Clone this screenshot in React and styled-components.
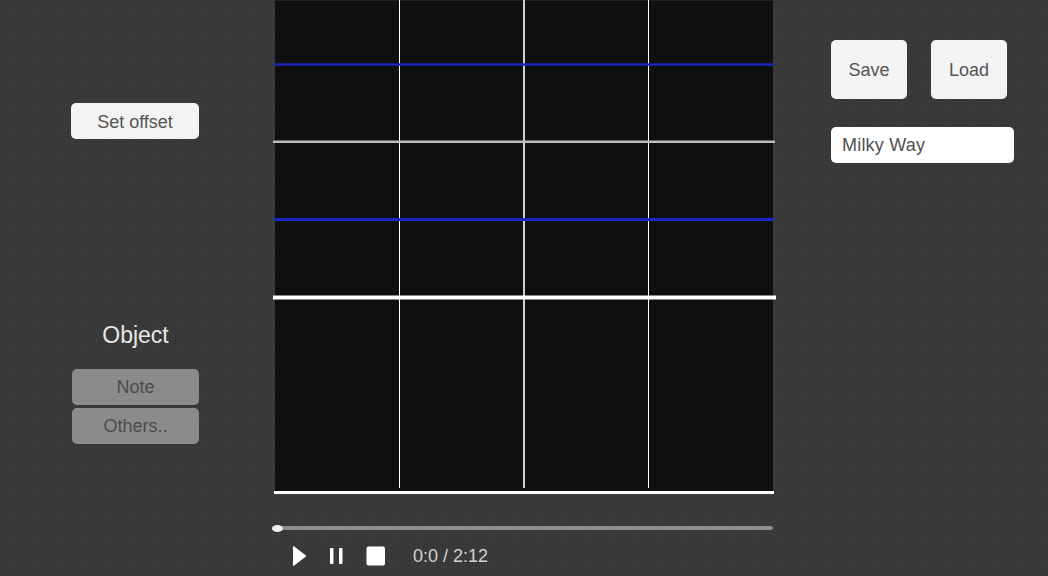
import React from 'react';
import styled, { createGlobalStyle, css } from 'styled-components';

const GlobalStyle = createGlobalStyle`
  html, body {
    margin: 0;
    padding: 0;
    overflow: hidden;
    background: #393939;
  }
`;

const Page = styled.div`
  width: 1048px;
  height: 576px;
  display: grid;
  grid-template-columns: 272px 504px 272px;
  font-family: 'Liberation Sans', Arial, sans-serif;
  background-color: #3a3a3a;
  background-image: radial-gradient(#313131 0.7px, transparent 0.9px);
  background-size: 3px 3px;
`;

const LeftPanel = styled.aside`
  display: flex;
  flex-direction: column;
  align-items: flex-start;
  padding: 103px 0 0 71px;
`;

const RightPanel = styled.aside`
  display: flex;
  flex-direction: column;
  align-items: flex-start;
  padding: 40px 0 0 55px;
`;

const Center = styled.main`
  display: flex;
  flex-direction: column;
`;

const Button = styled.button`
  box-sizing: border-box;
  padding: 0;
  border: 0;
  border-radius: 5px;
  background: #f3f3f3;
  color: #555;
  font: 18px/1 'Liberation Sans', Arial, sans-serif;
  ${(p) =>
    p.$muted &&
    css`
      background: #8b8b8b;
      color: #4c4c4c;
    `}
`;

const OffsetButton = styled(Button)`
  width: 128px;
  height: 36px;
  padding-top: 1px;
`;

const ObjectSection = styled.section`
  display: flex;
  flex-direction: column;
  align-items: center;
  width: 129px;
  margin-top: 182px;
  gap: 3px;
`;

const ObjectTitle = styled.h2`
  margin: 0 0 17px;
  color: #e6e6e6;
  font-size: 23px;
  font-weight: normal;
  line-height: 28px;
`;

const ObjectButton = styled(Button)`
  width: 127px;
  height: 36px;
`;

const FileButtons = styled.div`
  display: flex;
  gap: 24px;
`;

const FileButton = styled(Button)`
  width: 76px;
  height: 59px;
`;

const NameInput = styled.input`
  box-sizing: border-box;
  width: 183px;
  height: 36px;
  margin-top: 28px;
  padding: 0 11px;
  border: 0;
  border-radius: 5px;
  background: #fff;
  color: #505050;
  font: 18px 'Liberation Sans', Arial, sans-serif;
  letter-spacing: 0.2px;
  outline: none;
`;

const Board = styled.div`
  position: relative;
  box-sizing: border-box;
  height: 494px;
  margin: 0 3px 0 3px;
  background: #0f0f0f;
  border-top: 1px solid #222;
`;

const BoardLines = styled.svg`
  position: absolute;
  left: -3px;
  top: -1px;
  display: block;
`;

const Seek = styled.div`
  position: relative;
  height: 4px;
  margin: 32px 3px 0 0;
  background: #8d8d8d;
  border-radius: 2px;
`;

const SeekThumb = styled.span`
  position: absolute;
  left: 0;
  top: -1.5px;
  width: 11px;
  height: 7px;
  border-radius: 50%;
  background: #eee;
`;

const Transport = styled.div`
  display: flex;
  align-items: center;
  height: 20px;
  margin-top: 16px;
  padding-left: 21px;
`;

const IconButton = styled.span`
  display: block;
  flex: none;
  height: 20px;
  width: ${(p) => p.$width}px;
  margin-right: ${(p) => p.$gap}px;
  svg {
    display: block;
  }
`;

const TimeLabel = styled.span`
  color: #d2d2d2;
  font-size: 18px;
  line-height: 20px;
`;

const App = () => {
  return (
    <>
      <GlobalStyle />
      <Page>
        <LeftPanel>
          <OffsetButton>Set offset</OffsetButton>
          <ObjectSection>
            <ObjectTitle>Object</ObjectTitle>
            <ObjectButton $muted>Note</ObjectButton>
            <ObjectButton $muted>Others..</ObjectButton>
          </ObjectSection>
        </LeftPanel>

        <Center>
          <Board>
            <BoardLines width="504" height="494" viewBox="0 0 504 494">
              <rect x="127" y="0" width="1" height="488" fill="#fff" />
              <rect x="251" y="0" width="2" height="488" fill="#cfcfcf" />
              <rect x="376" y="0" width="1" height="488" fill="#fff" />
              <rect x="2" y="63.3" width="500" height="2.4" fill="#1b27c4" />
              <rect x="1" y="140.5" width="502" height="2.5" fill="#bdbdbd" />
              <rect x="2" y="218" width="500" height="3" fill="#1b27c4" />
              <rect x="1" y="295.5" width="503" height="4" fill="#fff" />
              <rect x="2" y="491" width="500" height="3" fill="#fff" />
            </BoardLines>
          </Board>
          <Seek>
            <SeekThumb />
          </Seek>
          <Transport>
            <IconButton $width={14} $gap={23}>
              <svg width="14" height="20" viewBox="0 0 14 20">
                <path d="M0.5 0.5 L13 10 L0.5 19.5 Z" fill="#fff" stroke="#fff" strokeLinejoin="round" />
              </svg>
            </IconButton>
            <IconButton $width={14} $gap={22}>
              <svg width="14" height="20" viewBox="0 0 14 20">
                <rect x="0" y="2" width="3.5" height="16" rx="1" fill="#fff" />
                <rect x="9" y="2" width="3.5" height="16" rx="1" fill="#fff" />
              </svg>
            </IconButton>
            <IconButton $width={20} $gap={27}>
              <svg width="20" height="20" viewBox="0 0 20 20">
                <rect x="0.5" y="0.5" width="18.5" height="19" rx="2" fill="#fff" />
              </svg>
            </IconButton>
            <TimeLabel>0:0 / 2:12</TimeLabel>
          </Transport>
        </Center>

        <RightPanel>
          <FileButtons>
            <FileButton>Save</FileButton>
            <FileButton>Load</FileButton>
          </FileButtons>
          <NameInput defaultValue="Milky Way" />
        </RightPanel>
      </Page>
    </>
  );
};

export default App;
